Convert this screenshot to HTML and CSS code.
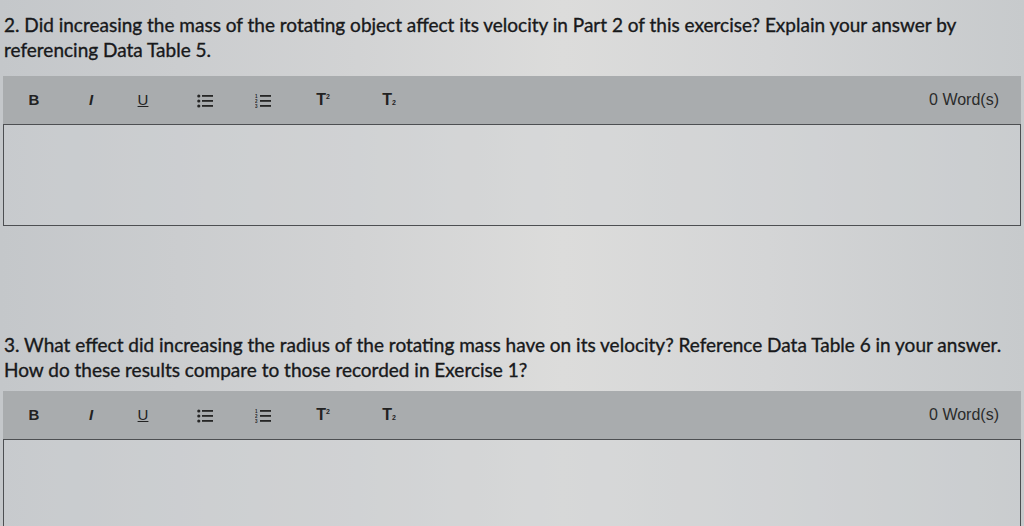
FILE: index.html
```html
<!DOCTYPE html>
<html lang="en">

<head>
    <meta charset="UTF-8">
    <meta name="viewport" content="width=device-width, initial-scale=1.0">
    <title>Exercise Questions</title>
    <link rel="stylesheet" href="styles.css">
</head>

<body>
    <div class="question q2">
        <p class="prompt">2. Did increasing the mass of the rotating object affect its velocity in Part 2 of this exercise? Explain your answer by<br>referencing Data Table 5.</p>
        <div class="editor">
            <div class="toolbar">
                <span class="tool tool-b">B</span>
                <span class="tool tool-i">I</span>
                <span class="tool tool-u">U</span>
                <span class="tool tool-ul">
                    <svg width="16" height="14" viewBox="0 0 16 14">
                        <circle cx="1.8" cy="2" r="1.6" />
                        <circle cx="1.8" cy="7" r="1.6" />
                        <circle cx="1.8" cy="12" r="1.6" />
                        <rect x="5" y="1" width="11" height="1.8" />
                        <rect x="5" y="6" width="11" height="1.8" />
                        <rect x="5" y="11" width="11" height="1.8" />
                    </svg>
                </span>
                <span class="tool tool-ol">
                    <svg width="16" height="14" viewBox="0 0 16 14">
                        <text x="0" y="4" font-size="4.5">1</text>
                        <text x="0" y="9" font-size="4.5">2</text>
                        <text x="0" y="14" font-size="4.5">3</text>
                        <rect x="5" y="1" width="11" height="1.8" />
                        <rect x="5" y="6" width="11" height="1.8" />
                        <rect x="5" y="11" width="11" height="1.8" />
                    </svg>
                </span>
                <span class="tool tool-sup">T<sup>2</sup></span>
                <span class="tool tool-sub">T<sub>2</sub></span>
                <span class="count">0 Word(s)</span>
            </div>
            <div class="area"></div>
        </div>
    </div>

    <div class="question q3">
        <p class="prompt">3. What effect did increasing the radius of the rotating mass have on its velocity? Reference Data Table 6 in your answer.<br>How do these results compare to those recorded in Exercise 1?</p>
        <div class="editor">
            <div class="toolbar">
                <span class="tool tool-b">B</span>
                <span class="tool tool-i">I</span>
                <span class="tool tool-u">U</span>
                <span class="tool tool-ul">
                    <svg width="16" height="14" viewBox="0 0 16 14">
                        <circle cx="1.8" cy="2" r="1.6" />
                        <circle cx="1.8" cy="7" r="1.6" />
                        <circle cx="1.8" cy="12" r="1.6" />
                        <rect x="5" y="1" width="11" height="1.8" />
                        <rect x="5" y="6" width="11" height="1.8" />
                        <rect x="5" y="11" width="11" height="1.8" />
                    </svg>
                </span>
                <span class="tool tool-ol">
                    <svg width="16" height="14" viewBox="0 0 16 14">
                        <text x="0" y="4" font-size="4.5">1</text>
                        <text x="0" y="9" font-size="4.5">2</text>
                        <text x="0" y="14" font-size="4.5">3</text>
                        <rect x="5" y="1" width="11" height="1.8" />
                        <rect x="5" y="6" width="11" height="1.8" />
                        <rect x="5" y="11" width="11" height="1.8" />
                    </svg>
                </span>
                <span class="tool tool-sup">T<sup>2</sup></span>
                <span class="tool tool-sub">T<sub>2</sub></span>
                <span class="count">0 Word(s)</span>
            </div>
            <div class="area"></div>
        </div>
    </div>
</body>

</html>
```

FILE: styles.css
```css
body {
    margin: 0;
    padding: 0;
    font-family: Lato, "Liberation Sans", sans-serif;
    color: #18191b;
    background: linear-gradient(to right, #c4c7ca 0%, #d2d3d4 35%, #dcdcdb 55%, #d4d5d6 75%, #c7cacc 100%);
    height: 526px;
    overflow: hidden;
}

.question {
    padding: 0 3px;
}

.prompt {
    margin: 0;
    padding-left: 1px;
    font-size: 19px;
    line-height: 25px;
    font-weight: 400;
    white-space: nowrap;
    -webkit-text-stroke: 0.35px #18191b;
}

.q2 .prompt {
    padding-top: 12px;
}

.q3 {
    margin-top: 106px;
}

.editor {
    margin-top: 14px;
}

.q3 .editor {
    margin-top: 9px;
}

.toolbar {
    display: flex;
    align-items: center;
    height: 48px;
    padding: 0 0 0 24px;
    background-color: #a9acae;
    font-family: "Liberation Sans", Arial, sans-serif;
    font-size: 15px;
    color: #222;
}

.tool {
    display: block;
    width: 14px;
    line-height: 18px;
    text-align: center;
}

.tool svg {
    display: block;
    margin: 2px auto 0;
    fill: #262626;
}

.tool svg text {
    font-family: "Liberation Sans", Arial, sans-serif;
    font-weight: 700;
}

.tool-b {
    font-weight: 700;
}

.tool-i {
    margin-left: 43px;
    font-style: italic;
    font-weight: 700;
}

.tool-u {
    margin-left: 38px;
    text-decoration: underline;
}

.tool-ul {
    margin-left: 47px;
    width: 16px;
}

.tool-ol {
    margin-left: 42px;
    width: 16px;
}

.tool-sup {
    margin-left: 45px;
    font-weight: 700;
    font-size: 16px;
}

.tool-sub {
    margin-left: 52px;
    font-weight: 700;
    font-size: 16px;
}

.tool sup,
.tool sub {
    font-size: 7px;
    line-height: 0;
}

.tool sub {
    vertical-align: 0;
}

.count {
    margin-left: auto;
    margin-right: 22px;
    font-size: 16px;
    color: #2b2b2b;
}

.area {
    height: 100px;
    border: 1px solid #4d4f52;
    background-color: rgba(205, 208, 211, 0.35);
}
```
